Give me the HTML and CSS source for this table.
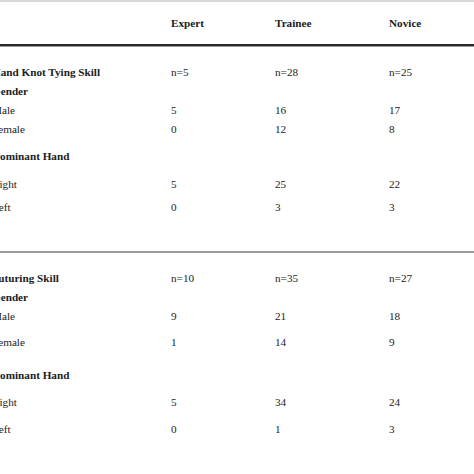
FILE: index.html
```html
<!DOCTYPE html>
<html>
<head>
<meta charset="utf-8">
<link rel="stylesheet" href="styles.css">
</head>
<body>
<div class="topband"></div>
<div class="table">
  <div class="row head">
    <div class="cell"></div>
    <div class="cell b">Expert</div>
    <div class="cell b">Trainee</div>
    <div class="cell b">Novice</div>
  </div>
  <div class="section first">
    <div class="row"><div class="cell b">Hand Knot Tying Skill</div><div class="cell">n=5</div><div class="cell">n=28</div><div class="cell">n=25</div></div>
    <div class="row"><div class="cell b">Gender</div><div class="cell"></div><div class="cell"></div><div class="cell"></div></div>
    <div class="row"><div class="cell">Male</div><div class="cell">5</div><div class="cell">16</div><div class="cell">17</div></div>
    <div class="row"><div class="cell">Female</div><div class="cell">0</div><div class="cell">12</div><div class="cell">8</div></div>
    <div class="row g8"><div class="cell b">Dominant Hand</div><div class="cell"></div><div class="cell"></div><div class="cell"></div></div>
    <div class="row g9"><div class="cell">Right</div><div class="cell">5</div><div class="cell">25</div><div class="cell">22</div></div>
    <div class="row g4"><div class="cell">Left</div><div class="cell">0</div><div class="cell">3</div><div class="cell">3</div></div>
  </div>
  <div class="section">
    <div class="row"><div class="cell b">Suturing Skill</div><div class="cell">n=10</div><div class="cell">n=35</div><div class="cell">n=27</div></div>
    <div class="row"><div class="cell b">Gender</div><div class="cell"></div><div class="cell"></div><div class="cell"></div></div>
    <div class="row"><div class="cell">Male</div><div class="cell">9</div><div class="cell">21</div><div class="cell">18</div></div>
    <div class="row g7"><div class="cell">Female</div><div class="cell">1</div><div class="cell">14</div><div class="cell">9</div></div>
    <div class="row g14"><div class="cell b">Dominant Hand</div><div class="cell"></div><div class="cell"></div><div class="cell"></div></div>
    <div class="row g8"><div class="cell">Right</div><div class="cell">5</div><div class="cell">34</div><div class="cell">24</div></div>
    <div class="row g8"><div class="cell">Left</div><div class="cell">0</div><div class="cell">1</div><div class="cell">3</div></div>
  </div>
</div>
</body>
</html>
```
FILE: styles.css
```css
html, body {
  margin: 0;
  padding: 0;
  background: #ffffff;
  overflow: hidden;
  width: 474px;
  height: 474px;
}
body {
  font-family: "Liberation Serif", "Times New Roman", serif;
  font-size: 11.2px;
  color: #1c1c1c;
}
.topband {
  height: 2px;
  background: #d9d9d9;
}
.table {
  margin-left: -8px;
  width: 500px;
}
.row {
  display: grid;
  grid-template-columns: 179px 104px 114px 103px;
  height: 19px;
  line-height: 19px;
}
.cell {
  white-space: nowrap;
}
.b {
  font-weight: bold;
}
.row.head {
  height: 42px;
  line-height: 42px;
  border-bottom: 2px solid #2a2a2a;
  box-shadow: 0 1px 0 #9a9a9a;
}
.section {
  padding-top: 16px;
}
.section.first {
  margin-top: 1px;
  padding-bottom: 34px;
  border-bottom: 2px solid #9c9c9c;
}
.g4 { margin-top: 4px; }
.g7 { margin-top: 7px; }
.g8 { margin-top: 8px; }
.g9 { margin-top: 9px; }
.g14 { margin-top: 14px; }
```
